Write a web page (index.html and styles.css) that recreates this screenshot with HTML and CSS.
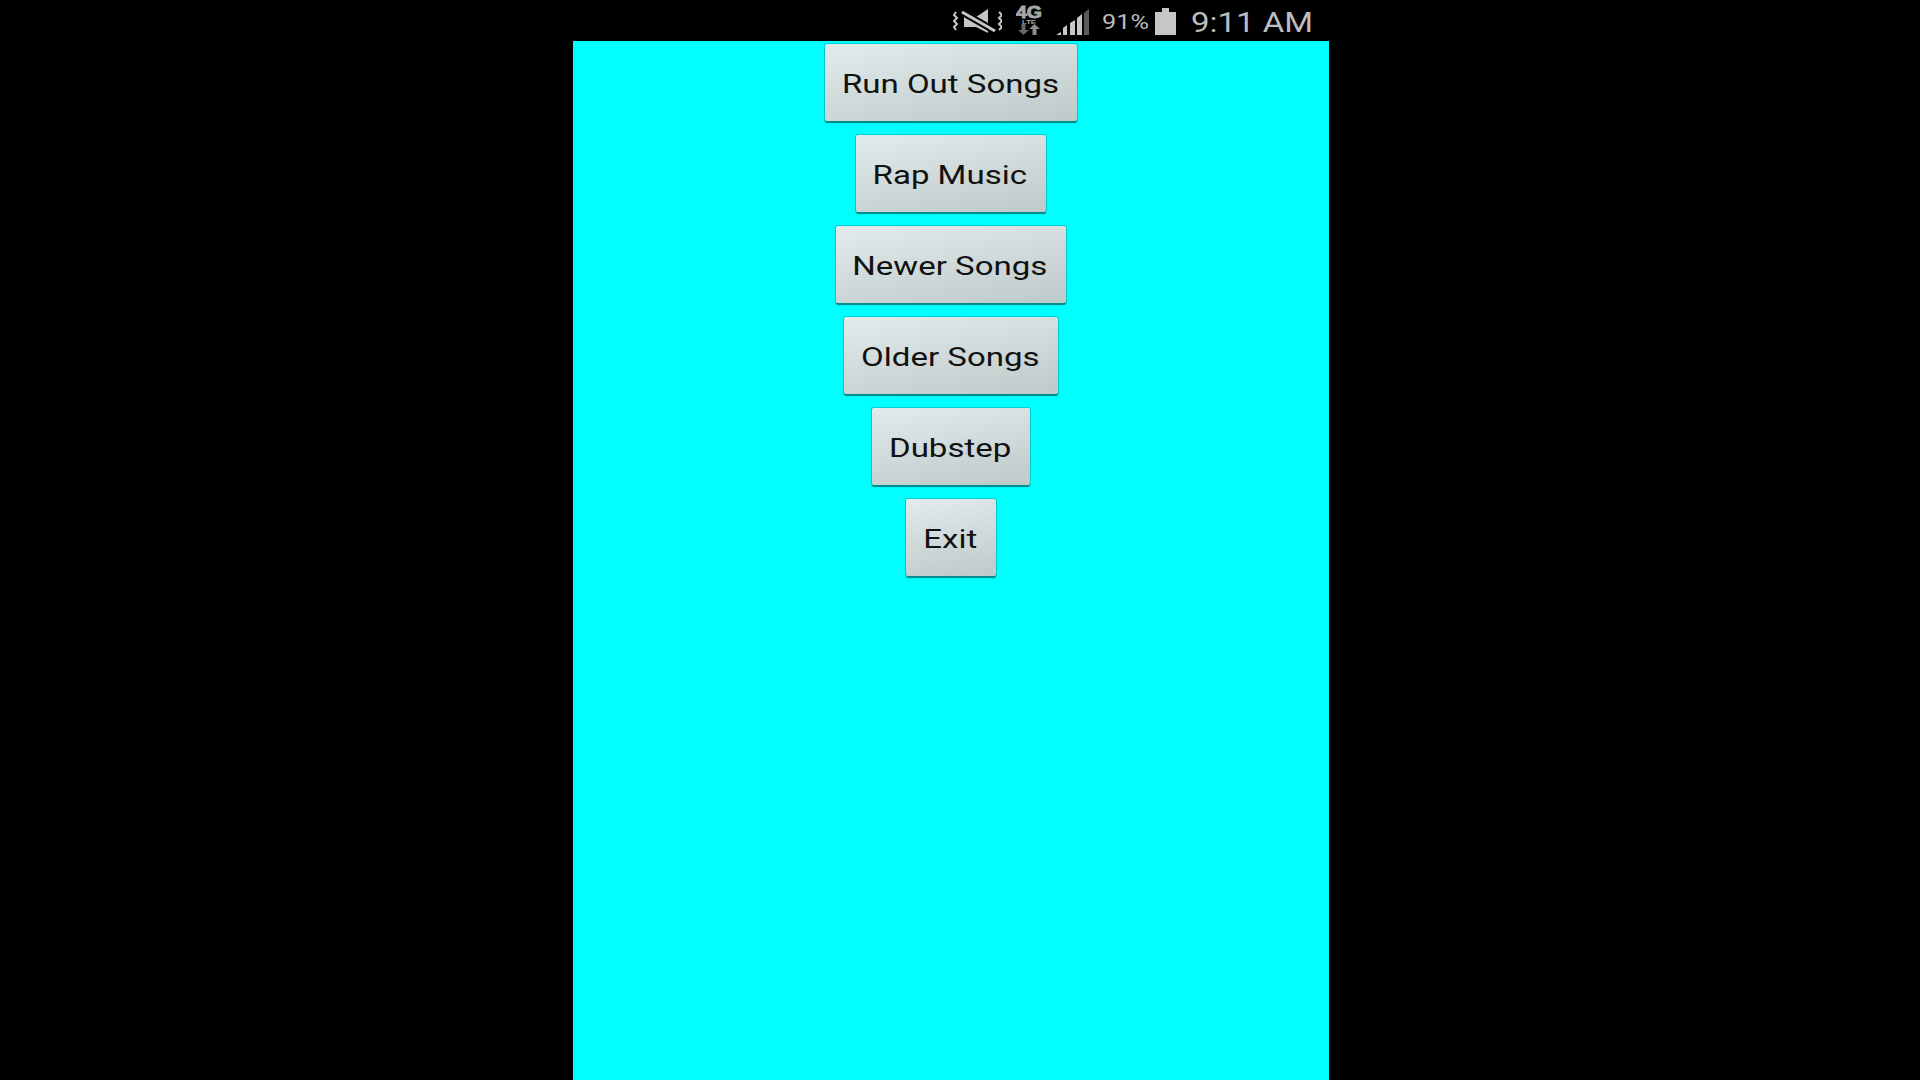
FILE: index.html
```html
<!DOCTYPE html>
<html lang="en">
<head>
    <meta charset="UTF-8">
    <meta name="viewport" content="width=device-width, initial-scale=1.0">
    <title>Songs</title>
    <link rel="stylesheet" href="styles.css">
</head>
<body>
    <div class="phone">
        <div class="status-bar">
            <!-- muted / vibrate -->
            <svg class="icon" width="49" height="41" viewBox="0 0 49 41">
                <path class="wave" d="M3 12l-2 3 3 3-3 3 3 3-3 3 2 3"/>
                <path class="wave" d="M46 12l3 3-3 3 3 3-3 3 3 3-3 3"/>
                <path class="fill" d="M11 17h12l12-8v24l-12-6H11z"/>
                <path class="cut" d="M9 12l33 19"/>
                <path class="slash" d="M9 12l33 19"/>
            </svg>
            <!-- network type -->
            <svg class="icon" width="26" height="41" viewBox="0 0 26 41">
                <text class="net-big" x="13" y="18" textLength="26" lengthAdjust="spacingAndGlyphs">4G</text>
                <text class="net-small" x="13" y="23.5" textLength="14" lengthAdjust="spacingAndGlyphs">LTE</text>
                <path class="arrow-down" d="M5.500 24h4v6h3.500l-5.500 5-5.500-5h3.500z"/>
                <path class="arrow-up" d="M20.500 35h-4v-6h-3.500l5.500-5 5.500 5h-3.500z"/>
            </svg>
            <!-- signal -->
            <svg class="icon" width="33" height="41" viewBox="0 0 33 41">
                <path class="fill" d="M0 35l5-3v3z"/>
                <path class="fill" d="M7 35v-7l4-3v10z"/>
                <path class="fill" d="M14 35V23l5-3v15z"/>
                <path class="fill" d="M21 35V18l5-4v21z"/>
                <path class="bar-off" d="M28 35V13l5-4v26z"/>
            </svg>
            <div class="level"><span class="wide">91%</span></div>
            <svg class="icon battery" width="21" height="41" viewBox="0 0 21 41">
                <path class="fill" d="M7 8h7v4h7v23H0V12h7z"/>
            </svg>
            <div class="clock"><span class="wide">9:11 AM</span></div>
        </div>
        <div class="screen">
            <button class="song-btn run-out"><span class="wide">Run Out Songs</span></button>
            <button class="song-btn rap"><span class="wide">Rap Music</span></button>
            <button class="song-btn newer"><span class="wide">Newer Songs</span></button>
            <button class="song-btn older"><span class="wide">Older Songs</span></button>
            <button class="song-btn dubstep"><span class="wide">Dubstep</span></button>
            <button class="song-btn exit"><span class="wide">Exit</span></button>
        </div>
    </div>
</body>
</html>
```

FILE: styles.css
```css
html, body {
    margin: 0;
    height: 100%;
    background-color: #000;
    overflow: hidden;
}
.phone {
    display: flex;
    flex-direction: column;
    width: 756px;
    height: 1080px;
    margin-left: 573px;
    font-family: Roboto, "Liberation Sans", sans-serif;
}
.status-bar {
    display: flex;
    justify-content: flex-end;
    align-items: center;
    gap: 14px;
    height: 41px;
    padding-right: 18px;
    color: #bdbdbd;
}
.icon {
    display: block;
    flex: none;
}
.fill {
    fill: #c6c6c6;
}
.wave {
    fill: none;
    stroke: #c6c6c6;
    stroke-width: 2;
}
.cut {
    fill: none;
    stroke: #000;
    stroke-width: 7;
}
.slash {
    fill: none;
    stroke: #c6c6c6;
    stroke-width: 3;
}
.net-big {
    font-family: "Liberation Sans", sans-serif;
    font-size: 16px;
    font-weight: bold;
    text-anchor: middle;
    fill: #a8a8a8;
    stroke: #a8a8a8;
    stroke-width: 0.8;
}
.net-small {
    font-family: "Liberation Sans", sans-serif;
    font-size: 6px;
    font-weight: bold;
    text-anchor: middle;
    fill: #a8a8a8;
}
.arrow-down {
    fill: #666;
}
.arrow-up {
    fill: #8e8e8e;
}
.bar-off {
    fill: #5a5a5a;
}
.wide {
    display: inline-block;
    white-space: nowrap;
    transform: scaleX(1.27);
}
.level {
    display: flex;
    justify-content: center;
    width: 45px;
    margin-right: -7px;
    padding-top: 3px;
    font-size: 21px;
}
.level .wide {
    transform: scaleX(1.2);
}
.battery {
    margin-right: 2px;
}
.clock {
    display: flex;
    justify-content: center;
    width: 119px;
    padding-top: 4px;
    font-size: 27px;
}
.clock .wide {
    transform: scaleX(1.22);
}
.screen {
    flex: 1;
    display: flex;
    flex-direction: column;
    align-items: center;
    gap: 14px;
    padding-top: 3px;
    background-color: #00ffff;
}
.song-btn {
    display: flex;
    justify-content: center;
    align-items: center;
    height: 77px;
    padding: 2px 2px 0 0;
    border: none;
    border-radius: 2px;
    background: linear-gradient(170deg, #e2ecec 0%, #d0dada 50%, #bec9c9 100%);
    box-shadow: 0 0 0 1px rgba(0, 150, 150, 0.45), 0 2px 1px rgba(0, 90, 90, 0.75);
    color: #111;
    font-family: Roboto, "Liberation Sans", sans-serif;
    font-size: 26px;
    cursor: pointer;
}
.run-out { width: 252px; }
.rap { width: 190px; }
.newer { width: 230px; }
.older { width: 214px; }
.dubstep { width: 158px; }
.exit { width: 90px; }
```
